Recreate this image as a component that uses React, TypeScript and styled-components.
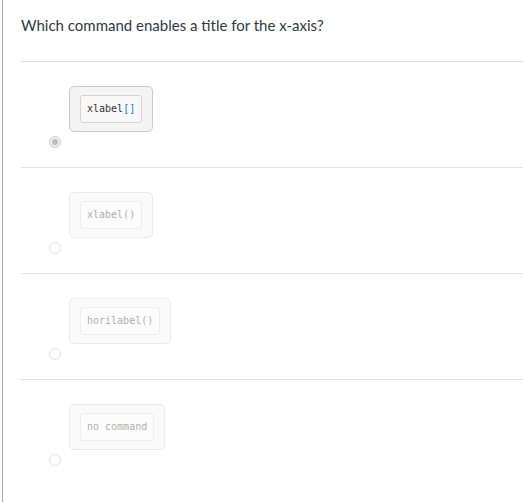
import React from "react";
import styled, { createGlobalStyle } from "styled-components";

const Global = createGlobalStyle`
  html, body { margin: 0; padding: 0; background: #fff; }
  body { font-family: Lato, "Noto Sans", sans-serif; }
`;

const Frame = styled.div`
  margin-left: 2px;
  border-left: 1px solid #a8a8a8;
  min-height: 502px;
  padding-left: 18px;
  box-sizing: border-box;
`;

const Header = styled.div`
  border-bottom: 1px solid #dcdcdc;
  padding-top: 15px;
  height: 46px;
`;

const Title = styled.h2`
  margin: 0;
  font-size: 15px;
  line-height: 20px;
  font-weight: 400;
  color: #2d3b45;
`;

const Option = styled.div<{ $last?: boolean }>`
  display: flex;
  flex-direction: column;
  align-items: flex-start;
  padding: 24px 0 19px 0;
  border-bottom: ${(p) => (p.$last ? "none" : "1px solid #e4e4e4")};
`;

const AnswerBox = styled.div<{ $faded?: boolean }>`
  margin-left: 48px;
  height: 46px;
  box-sizing: border-box;
  display: flex;
  align-items: center;
  padding: 0 10px;
  background: #f4f4f4;
  border: 1px solid #cbcbcb;
  border-radius: 5px;
  opacity: ${(p) => (p.$faded ? 0.4 : 1)};
`;

const Code = styled.code`
  display: inline-block;
  height: 28px;
  box-sizing: border-box;
  line-height: 26px;
  padding: 0 6px;
  background: #f8f8f8;
  border: 1px solid #d4d4d4;
  border-radius: 3px;
  font-family: "DejaVu Sans Mono", "Liberation Mono", monospace;
  font-size: 10px;
  color: #333;
`;

const Bracket = styled.span`
  color: #2a7bd1;
`;

const Radio = styled.span<{ $checked?: boolean }>`
  margin-left: 28px;
  margin-top: 4px;
  width: 12px;
  height: 12px;
  box-sizing: border-box;
  border-radius: 50%;
  border: 1px solid ${(p) => (p.$checked ? "#cfcfcf" : "#e2e2e2")};
  background: ${(p) => (p.$checked ? "#f0f0f0" : "#fff")};
  display: flex;
  align-items: center;
  justify-content: center;
  &::after {
    content: "";
    width: 6px;
    height: 6px;
    border-radius: 50%;
    background: ${(p) => (p.$checked ? "#bdbdbd" : "transparent")};
  }
`;

const options: { text: React.ReactNode; checked?: boolean }[] = [
  {
    text: (
      <>
        xlabel<Bracket>[]</Bracket>
      </>
    ),
    checked: true,
  },
  { text: "xlabel()" },
  { text: "horilabel()" },
  { text: "no command" },
];

export default function App() {
  return (
    <>
      <Global />
      <Frame>
        <Header>
          <Title>Which command enables a title for the x-axis?</Title>
        </Header>
        {options.map((o, i) => (
          <Option key={i} $last={i === options.length - 1}>
            <AnswerBox $faded={!o.checked}>
              <Code>{o.text}</Code>
            </AnswerBox>
            <Radio $checked={o.checked} />
          </Option>
        ))}
      </Frame>
    </>
  );
}
